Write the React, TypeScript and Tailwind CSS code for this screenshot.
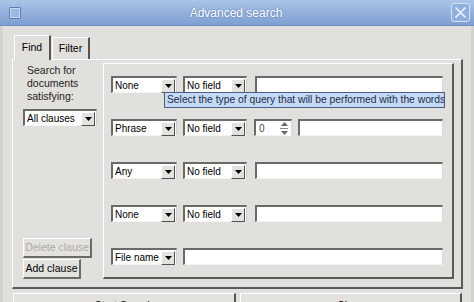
import React from "react";

function Arrow() {
  return (
    <div className="w-[14px] h-[14px] mt-[1px] mr-[1px] bg-[#e4e2df] border-r border-b border-[#505050] border-t border-l border-t-white border-l-white flex items-center justify-center shrink-0">
      <svg width="7" height="4" viewBox="0 0 7 4">
        <path d="M0 0 H7 L3.5 4 Z" fill="#000" />
      </svg>
    </div>
  );
}

function Select({ label, w }: { label: string; w: string }) {
  return (
    <div className={`${w} h-[17px] bg-white border-t-2 border-l-2 border-t-[#6a6a6a] border-l-[#6a6a6a] border-b border-r border-b-[#f4f4f4] border-r-[#d0d0d0] flex items-start shrink-0`}>
      <span className="flex-1 pl-[2px] leading-[15px] text-[10px] text-black whitespace-nowrap overflow-hidden">{label}</span>
      <Arrow />
    </div>
  );
}

function Input({ w }: { w: string }) {
  return (
    <div className={`${w} h-[17px] bg-white border-t-2 border-l-2 border-t-[#6a6a6a] border-l-[#6a6a6a] border-b border-r border-b-[#f4f4f4] border-r-[#d8d8d8]`} />
  );
}

function Spin() {
  return (
    <div className="w-[38px] h-[17px] bg-white border-t-2 border-l-2 border-t-[#6a6a6a] border-l-[#6a6a6a] border-b border-r border-b-[#f4f4f4] border-r-[#d8d8d8] flex items-start shrink-0">
      <span className="flex-1 pl-[3px] leading-[15px] text-[10px] text-[#444]">0</span>
      <div className="w-[10px] h-[14px] flex flex-col items-center justify-center gap-[2px] mr-[2px]">
        <svg width="7" height="4" viewBox="0 0 7 4"><path d="M0 4 H7 L3.5 0 Z" fill="#666" /></svg>
        <div className="w-[8px] h-[1px] bg-[#888]" />
        <svg width="7" height="4" viewBox="0 0 7 4"><path d="M0 0 H7 L3.5 4 Z" fill="#666" /></svg>
      </div>
    </div>
  );
}

function Btn({ label, disabled, w }: { label: string; disabled?: boolean; w: string }) {
  return (
    <div className={`${w} h-[20px] bg-[#e4e2df] border-t border-l border-t-white border-l-white border-b-2 border-r-2 border-b-[#6a6a6a] border-r-[#6a6a6a] flex items-center justify-center text-[10.5px] whitespace-nowrap ${disabled ? "text-[#ababab]" : "text-black"}`}>
      {label}
    </div>
  );
}

export default function App() {
  return (
    <div
      className="w-[474px] h-[302px] overflow-hidden bg-[#e2e0dd] relative flex flex-col"
      style={{ fontFamily: '"Liberation Sans", Arial, sans-serif' }}
    >
      {/* Title bar */}
      <div className="h-[26px] shrink-0 bg-gradient-to-b from-[#abc5e8] to-[#7e9fd2] border-b border-[#6f8fbf] flex items-center relative">
        <div className="ml-[9px] w-[12px] h-[12px] border border-[#5e7fb5] bg-[#9db9e2] rounded-[1px] shadow-[inset_0_0_0_1px_#c8d8f0]" />
        <div className="flex-1 text-center text-[12px] text-white [text-shadow:0_0_2px_#4a6aa0]">Advanced search</div>
        <div className="mr-[4px] w-[19px] h-[19px] rounded-[3px] border border-[#d6e2f4] bg-[#8fb0dd] flex items-center justify-center">
          <svg width="13" height="13" viewBox="0 0 13 13">
            <path d="M1.5 1.5 L11.5 11.5 M11.5 1.5 L1.5 11.5" stroke="#eef4fc" strokeWidth="1.6" />
          </svg>
        </div>
      </div>

      {/* Body */}
      <div className="flex-1 flex flex-col border-l-[3px] border-l-[#d4d2cf] border-r-[3px] border-r-[#d4d2cf] pl-[9px] pr-[8px]">
        {/* Tabs */}
        <div className="flex items-end h-[33px] pl-[2px]">
          <div className="w-[37px] h-[25px] border-t border-l border-t-white border-l-white border-r-2 border-r-[#555] flex items-center justify-center text-[10.5px] text-black relative top-[1px] bg-[#e2e0dd] z-10">Find</div>
          <div className="w-[38px] h-[22px] ml-[1px] border-t border-l border-t-white border-l-white border-r-2 border-r-[#555] flex items-center justify-center text-[10.5px] text-black">Filter</div>
        </div>

        {/* Panel */}
        <div className="h-[230px] border-t border-l border-t-white border-l-white border-r-2 border-b-2 border-r-[#5a5a5a] border-b-[#5a5a5a] flex relative">
          {/* Left column */}
          <div className="w-[90px] flex flex-col justify-between pl-[10px] pt-[4px] pb-[8px]">
            <div>
              <div className="pl-[4px] text-[10.5px] leading-[13px] text-[#222]">
                Search for<br />documents<br />satisfying:
              </div>
              <div className="mt-[6px]">
                <Select label="All clauses" w="w-[74px]" />
              </div>
            </div>
            <div className="flex flex-col gap-[1px] items-start">
              <Btn label="Delete clause" disabled w="w-[69px]" />
              <Btn label="Add clause" w="w-[58px]" />
            </div>
          </div>

          {/* Clause frame */}
          <div className="mt-[3px] mb-[8px] w-[351px] border-t border-l border-t-white border-l-white border-r-2 border-b-2 border-r-[#5a5a5a] border-b-[#5a5a5a] pt-[12px] pl-[7px] pr-[9px] flex flex-col gap-[26px]">
            <div className="flex gap-[6px] h-[17px]">
              <Select label="None" w="w-[66px]" />
              <Select label="No field" w="w-[64px]" />
              <div className="ml-[2px] flex-1"><Input w="w-full" /></div>
            </div>
            <div className="flex gap-[6px] h-[17px]">
              <Select label="Phrase" w="w-[66px]" />
              <Select label="No field" w="w-[64px]" />
              <div className="ml-[1px]"><Spin /></div>
              <div className="flex-1"><Input w="w-full" /></div>
            </div>
            <div className="flex gap-[6px] h-[17px]">
              <Select label="Any" w="w-[66px]" />
              <Select label="No field" w="w-[64px]" />
              <div className="ml-[2px] flex-1"><Input w="w-full" /></div>
            </div>
            <div className="flex gap-[6px] h-[17px]">
              <Select label="None" w="w-[66px]" />
              <Select label="No field" w="w-[64px]" />
              <div className="ml-[2px] flex-1"><Input w="w-full" /></div>
            </div>
            <div className="flex gap-[6px] h-[17px]">
              <Select label="File name" w="w-[66px]" />
              <div className="flex-1"><Input w="w-full" /></div>
            </div>
          </div>

          {/* Tooltip */}
          <div className="absolute left-[151px] top-[32px] w-[281px] h-[16px] pl-[2px] bg-[#c5daf6] border border-[#4a5f88] text-[10.3px] leading-[14px] text-[#1c2c48] whitespace-nowrap overflow-hidden">
            Select the type of query that will be performed with the words
          </div>
        </div>

        {/* Bottom buttons */}
        <div className="flex gap-[4px] mt-[4px] ml-[1px]">
          <div className="w-[223px] h-[24px] bg-[#e4e2df] border-t border-l border-t-white border-l-white border-r-2 border-r-[#555] flex items-start justify-center pt-[4px] text-[10.5px] text-black">Start Search</div>
          <div className="w-[222px] h-[24px] bg-[#e4e2df] border-t border-l border-t-white border-l-white border-r-2 border-r-[#555] flex items-start justify-center pt-[4px] text-[10.5px] text-black">Close</div>
        </div>
      </div>
    </div>
  );
}
